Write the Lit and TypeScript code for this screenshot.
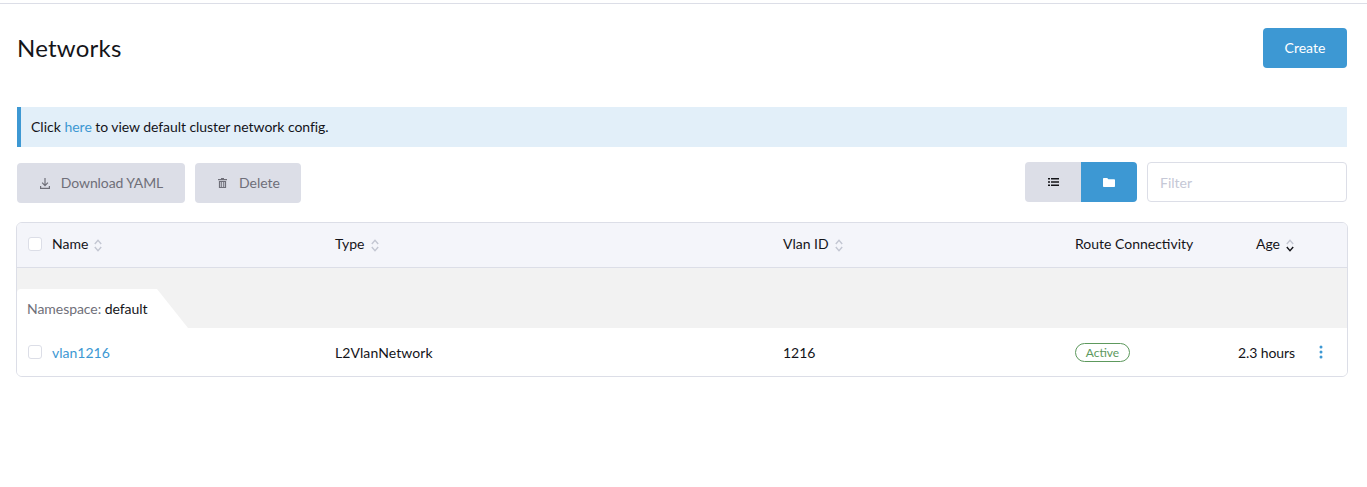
import { LitElement, html, css } from "lit";
import { customElement } from "lit/decorators.js";

const sortIcon = (active = false) => html`<svg class="sort" width="10" height="13" viewBox="0 0 10 13" fill="none" stroke-width="1.4">
  <path d="M1.8 5 5 1.4 8.2 5" stroke="#c3c6d2"/>
  <path d="M1.8 8 5 11.6 8.2 8" stroke="${active ? "#141419" : "#c3c6d2"}"/>
</svg>`;

@customElement("app-root")
export class AppRoot extends LitElement {
  static styles = css`
    :host { display: block; font-family: Lato, "Liberation Sans", sans-serif; font-size: 14px; color: #141419; background: #fff; min-height: 487px; }
    * { box-sizing: border-box; }
    .topline { height: 4px; border-bottom: 1px solid #dcdee7; }
    .page { padding: 0 20px 0 17px; }
    .header { display: flex; justify-content: space-between; align-items: center; padding-top: 24px; height: 64px; margin-bottom: 39px; }
    h1 { margin: 0; font-size: 24px; font-weight: 400; line-height: 40px; letter-spacing: 0.22px; }
    .btn { display: inline-flex; align-items: center; justify-content: center; height: 40px; border: 0; border-radius: 4px; font: inherit; padding: 0 0 2px; }
    .primary { background: #3d98d3; color: #fff; width: 84px; }
    .banner { height: 40px; background: #e2eff9; border-left: 4px solid #3d98d3; padding: 0 0 2px 10px; display: flex; align-items: center; }
    .banner a { color: #3d98d3; text-decoration: none; white-space: pre; }
    .banner span { white-space: pre; }
    .banner .tail { letter-spacing: -0.06px; }
    .toolbar { display: flex; justify-content: space-between; align-items: flex-start; margin-top: 15px; height: 60px; }
    .left { display: flex; gap: 10px; padding-top: 1px; }
    .right { display: flex; gap: 10px; }
    .muted { background: #dcdee7; color: #6f6f79; }
    .dl { width: 168px; letter-spacing: -0.1px; gap: 11px; padding-left: 1px; }
    .dl svg { flex: none; margin-top: 2px; }
    .del { width: 106px; gap: 12px; padding-left: 2px; }
    .del svg { flex: none; margin-top: 1px; }
    .toggle { display: flex; width: 112px; height: 40px; border-radius: 4px; overflow: hidden; }
    .toggle div { flex: 1; display: flex; align-items: center; justify-content: center; background: #dcdee7; }
    .toggle div.on { background: #3d98d3; }
    .filter { width: 200px; height: 40px; border: 1px solid #dcdee7; border-radius: 4px; padding: 1px 12px 0; display: flex; align-items: center; color: #c5c8d6; }
    .table { border: 1px solid #dcdee7; border-radius: 6px; overflow: hidden; height: 155px; margin: 0 -1px; }
    .row { display: grid; grid-template-columns: 35px 283px 448px 292px 125px 95px 1fr; align-items: center; }
    .chk { padding-left: 11px; display: flex; }
    .head { height: 45px; background: #f4f5fa; border-bottom: 1px solid #dcdee7; padding-bottom: 3px; }
    .head .cell { display: flex; align-items: center; gap: 5px; }
    .head .sort { margin-top: 3px; }
    .right-cell { justify-self: end; }
    .narrow { letter-spacing: -0.1px; }
    .wide { letter-spacing: 0.08px; }
    .box { width: 14px; height: 14px; border: 1px solid #dcdee7; border-radius: 3px; background: #fff; }
    .group { height: 60px; background: #f2f2f2; display: flex; align-items: flex-end; }
    .tab { width: 171px; height: 39px; background: #fff; clip-path: polygon(0 0, 140px 0, 171px 100%, 0 100%); padding-left: 10px; display: flex; align-items: center; white-space: pre; border-top-left-radius: 4px; letter-spacing: -0.05px; }
    .tab .k { color: #6f6f79; }
    .data { height: 48px; background: #fff; }
    .link { color: #3d98d3; }
    .badge { display: inline-flex; align-items: center; height: 19px; width: 55px; justify-content: center; border: 1px solid #5d995d; border-radius: 10px; color: #5d995d; font-size: 12px; }
    .dots { display: flex; justify-content: flex-end; padding-right: 24px; }
    .sort { flex: none; }
  `;

  render() {
    return html`
      <div class="topline"></div>
      <div class="page">
        <div class="header">
          <h1>Networks</h1>
          <button class="btn primary">Create</button>
        </div>
        <div class="banner"><span>Click </span><a>here</a><span class="tail"> to view default cluster network config.</span></div>
        <div class="toolbar">
          <div class="left">
            <button class="btn muted dl">
              <svg width="10" height="11" viewBox="0 0 10 11" fill="none" stroke="#6f6f79" stroke-width="1.2"><path d="M5 0v7.6M2.1 4.7 5 7.6l2.9-2.9M.6 8v2.4h8.8V8"/></svg>
              Download YAML
            </button>
            <button class="btn muted del">
              <svg width="9" height="10" viewBox="0 0 9 10" fill="#6f6f79"><path fill-rule="evenodd" d="M3 0h3v.9h3v1.3H0V.9h3zM.9 2.9h7.2V10H.9zM2.3 4v4.9h.9V4zm1.75 0v4.9h.9V4zM5.8 4v4.9h.9V4z"/></svg>
              Delete
            </button>
          </div>
          <div class="right">
            <div class="toggle">
              <div><svg width="11" height="8" viewBox="0 0 11 8" fill="#141419"><path d="M0 0h2v1.6H0zM3 0h8v1.6H3zM0 3.2h2v1.6H0zM3 3.2h8v1.6H3zM0 6.4h2V8H0zM3 6.4h8V8H3z"/></svg></div>
              <div class="on"><svg width="12" height="9" viewBox="0 0 12 9" fill="#fff"><path d="M0 .8A.8.8 0 0 1 .8 0h3.4l1.2 1.3h5.8a.8.8 0 0 1 .8.8v6.1a.8.8 0 0 1-.8.8H.8a.8.8 0 0 1-.8-.8z"/></svg></div>
            </div>
            <div class="filter">Filter</div>
          </div>
        </div>
        <div class="table">
          <div class="row head">
            <div class="chk"><div class="box"></div></div>
            <div class="cell">Name ${sortIcon()}</div>
            <div class="cell">Type ${sortIcon()}</div>
            <div class="cell">Vlan ID ${sortIcon()}</div>
            <div class="cell">Route Connectivity</div>
            <div class="cell right-cell">Age ${sortIcon(true)}</div>
            <div></div>
          </div>
          <div class="group">
            <div class="tab"><span class="k">Namespace: </span><span>default</span></div>
          </div>
          <div class="row data">
            <div class="chk"><div class="box"></div></div>
            <div class="link">vlan1216</div>
            <div class="wide">L2VlanNetwork</div>
            <div>1216</div>
            <div><span class="badge">Active</span></div>
            <div class="right-cell narrow">2.3 hours</div>
            <div class="dots"><svg width="4" height="14" viewBox="0 0 4 14" fill="#3d98d3"><circle cx="2" cy="2" r="1.5"/><circle cx="2" cy="7" r="1.5"/><circle cx="2" cy="12" r="1.5"/></svg></div>
          </div>
        </div>
      </div>
    `;
  }
}
